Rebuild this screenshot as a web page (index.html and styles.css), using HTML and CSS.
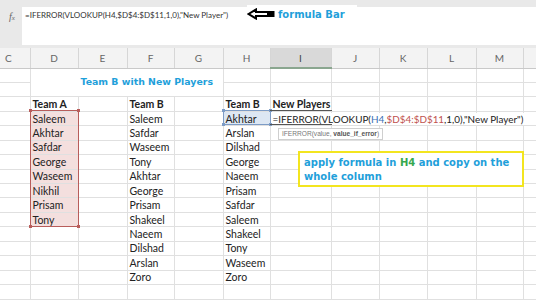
FILE: index.html
```html
<!DOCTYPE html>
<html lang="en">
<head>
    <meta charset="UTF-8">
    <title>Team B with New Players</title>
    <link rel="stylesheet" href="styles.css">
</head>
<body>
    <div class="formula-bar">
        <div class="fx">f<span>x</span></div>
        <div class="formula-input">
            <span class="formula-text">=IFERROR(VLOOKUP(H4,$D$4:$D$11,1,0),"New Player")</span>
            <span class="note">
                <svg width="28" height="12" viewBox="0 0 28 12">
                    <polygon points="1.5,6 9,1.5 9,4 26.5,4 26.5,8 9,8 9,10.5" fill="#fff" stroke="#000" stroke-width="2" stroke-linejoin="miter"/>
                    <rect x="20" y="4" width="7" height="4" fill="#000"/>
                </svg>
                <span class="note-label">formula Bar</span>
            </span>
        </div>
    </div>
    <div class="bar-gap"></div>
    <div class="sheet">
        <table class="grid">
            <colgroup>
                <col style="width:30px"><col style="width:48px"><col style="width:49px"><col style="width:47px">
                <col style="width:49px"><col style="width:47px"><col style="width:61px"><col style="width:48px">
                <col style="width:48px"><col style="width:49px"><col style="width:47px"><col style="width:13px">
            </colgroup>
            <thead>
                <tr><th class="first">C</th><th>D</th><th>E</th><th>F</th><th>G</th><th>H</th><th class="active">I</th><th>J</th><th>K</th><th>L</th><th>M</th><th></th></tr>
            </thead>
            <tbody>
                <tr><td></td><td class="title" colspan="4" rowspan="2">Team B with New Players</td><td></td><td></td><td></td><td></td><td></td><td></td><td></td></tr>
                <tr><td></td><td></td><td></td><td></td><td></td><td></td><td></td><td></td></tr>
                <tr><td></td><td class="head">Team A</td><td></td><td class="head">Team B</td><td></td><td class="head">Team B</td><td class="head">New Players</td><td></td><td></td><td></td><td></td><td></td></tr>
                <tr><td></td><td class="pink">Saleem</td><td></td><td>Saleem</td><td></td><td class="picked">Akhtar</td><td class="editing"><span class="cell-formula">=IFERROR(VLOOKUP(<span class="ref-h">H4</span>,<span class="ref-d">$D$4:$D$11</span>,1,0),"New Player")</span></td><td></td><td></td><td></td><td></td><td></td></tr>
                <tr><td></td><td class="pink">Akhtar</td><td></td><td>Safdar</td><td></td><td>Arslan</td><td></td><td></td><td></td><td></td><td></td><td></td></tr>
                <tr><td></td><td class="pink">Safdar</td><td></td><td>Waseem</td><td></td><td>Dilshad</td><td></td><td></td><td></td><td></td><td></td><td></td></tr>
                <tr><td></td><td class="pink">George</td><td></td><td>Tony</td><td></td><td>George</td><td></td><td></td><td></td><td></td><td></td><td></td></tr>
                <tr><td></td><td class="pink">Waseem</td><td></td><td>Akhtar</td><td></td><td>Naeem</td><td></td><td></td><td></td><td></td><td></td><td></td></tr>
                <tr><td></td><td class="pink">Nikhil</td><td></td><td>George</td><td></td><td>Prisam</td><td></td><td></td><td></td><td></td><td></td><td></td></tr>
                <tr><td></td><td class="pink">Prisam</td><td></td><td>Prisam</td><td></td><td>Safdar</td><td></td><td></td><td></td><td></td><td></td><td></td></tr>
                <tr><td></td><td class="pink">Tony</td><td></td><td>Shakeel</td><td></td><td>Saleem</td><td></td><td></td><td></td><td></td><td></td><td></td></tr>
                <tr><td></td><td></td><td></td><td>Naeem</td><td></td><td>Shakeel</td><td></td><td></td><td></td><td></td><td></td><td></td></tr>
                <tr><td></td><td></td><td></td><td>Dilshad</td><td></td><td>Tony</td><td></td><td></td><td></td><td></td><td></td><td></td></tr>
                <tr><td></td><td></td><td></td><td>Arslan</td><td></td><td>Waseem</td><td></td><td></td><td></td><td></td><td></td><td></td></tr>
                <tr><td></td><td></td><td></td><td>Zoro</td><td></td><td>Zoro</td><td></td><td></td><td></td><td></td><td></td><td></td></tr>
                <tr><td></td><td></td><td></td><td></td><td></td><td></td><td></td><td></td><td></td><td></td><td></td><td></td></tr>
                <tr><td></td><td></td><td></td><td></td><td></td><td></td><td></td><td></td><td></td><td></td><td></td><td></td></tr>
            </tbody>
        </table>

        <!-- reference highlights drawn over the grid -->
        <div class="range-box">
            <i class="knob tl"></i><i class="knob tr"></i><i class="knob bl"></i><i class="knob br"></i>
        </div>
        <div class="pick-box">
            <i class="knob tl"></i><i class="knob tr"></i><i class="knob bl"></i><i class="knob br"></i>
        </div>
        <div class="edit-box"></div>
        <div class="tip">IFERROR(value, <b>value_if_error</b>)</div>
        <div class="callout">apply formula in <span class="green">H4</span> and copy on the whole column</div>
    </div>
</body>
</html>
```

FILE: styles.css
```css
body {
    margin: 0;
    width: 536px;
    height: 300px;
    overflow: hidden;
    background: #fff;
    font-family: Lato, "Liberation Sans", sans-serif;
}

/* formula bar */
.formula-bar {
    display: flex;
    height: 45px;
    padding-top: 7px;
    box-sizing: border-box;
    background: #e9e9e9;
}
.fx {
    width: 22px;
    padding: 4px 0 0 9px;
    box-sizing: border-box;
    font-family: "Liberation Serif", serif;
    font-style: italic;
    font-size: 10px;
    color: #666;
}
.fx span {
    font-size: 7px;
}
.formula-input {
    flex: 1;
    display: flex;
    align-items: flex-start;
    padding: 3px 0 0 3px;
    background: #fff;
}
.formula-text {
    width: 222px;
    font-size: 8px;
    line-height: 10px;
    color: #333;
}
.note {
    display: flex;
    align-items: center;
    gap: 3px;
    margin-top: -5px;
    padding: 3px 12px 3px 0;
    background: #fff;
}
.note-label {
    font-family: "DejaVu Sans", sans-serif;
    font-weight: bold;
    font-size: 10px;
    color: #1fa0da;
}
.bar-gap {
    height: 3px;
    background: #e9e9e9;
}

/* sheet grid */
.sheet {
    position: relative;
}
.grid {
    width: 536px;
    table-layout: fixed;
    border-collapse: collapse;
    font-size: 10.5px;
    color: #222;
}
.grid th {
    height: 19px;
    padding: 0;
    background: #f3f3f3;
    border-right: 1px solid #d6d6d6;
    border-bottom: 1px solid #c9c9c9;
    font-weight: normal;
    font-size: 10px;
    color: #666;
}
.grid th.first {
    text-align: left;
    padding-left: 5px;
}
.grid th.active {
    background: #d9d9d9;
    border-bottom: 2px solid #8aa68f;
    color: #444;
}
.grid tbody tr {
    height: 14.44px;
}
.grid td {
    padding: 0 0 0 2px;
    border: 1px solid #e0e0e0;
    white-space: nowrap;
    overflow: visible;
    line-height: 12px;
}
.grid td:first-child {
    border-left: none;
}
.grid td.head {
    font-weight: bold;
}
.grid td.pink {
    background: #f4dfde;
}
.grid td.picked {
    background: #dde7f3;
}
.grid td.title {
    padding-left: 50px;
    font-family: "DejaVu Sans", sans-serif;
    font-weight: bold;
    font-size: 9.4px;
    color: #1fa0da;
}
.cell-formula {
    position: relative;
    padding-right: 4px;
    background: #fff;
    font-size: 9.9px;
}
.ref-h {
    color: #3a6fb5;
}
.ref-d {
    color: #c0504d;
}

/* overlays */
.range-box,
.pick-box,
.edit-box {
    position: absolute;
    box-sizing: border-box;
}
.range-box {
    left: 30px;
    top: 62px;
    width: 49px;
    height: 117px;
    border: 1px solid #b85d5b;
}
.range-box .knob {
    background: #b85d5b;
}
.pick-box {
    left: 223px;
    top: 62px;
    width: 48px;
    height: 15px;
    border: 1px solid #7d9cc6;
}
.pick-box .knob {
    background: #7d9cc6;
}
.knob {
    position: absolute;
    width: 3px;
    height: 3px;
}
.knob.tl { left: -2px; top: -2px; }
.knob.tr { right: -2px; top: -2px; }
.knob.bl { left: -2px; bottom: -2px; }
.knob.br { right: -2px; bottom: -2px; }
.edit-box {
    left: 270px;
    top: 62px;
    width: 62px;
    height: 15px;
    border-top: 1px solid #555;
    border-bottom: 1px solid #555;
}
.tip {
    position: absolute;
    left: 278px;
    top: 80px;
    padding: 1px 3px;
    background: #fff;
    border: 1px solid #cfcfcf;
    font-family: "Liberation Sans", sans-serif;
    font-size: 6.6px;
    line-height: 8px;
    color: #777;
}
.tip b {
    color: #555;
}
.callout {
    position: absolute;
    left: 298px;
    top: 103px;
    width: 226px;
    height: 36px;
    box-sizing: border-box;
    padding: 3px 0 0 4px;
    background: #fff;
    border: 2px solid #f3e51f;
    font-family: "DejaVu Sans", sans-serif;
    font-weight: bold;
    font-size: 10px;
    line-height: 14px;
    color: #1fa0da;
}
.callout .green {
    color: #37a84e;
}
```
